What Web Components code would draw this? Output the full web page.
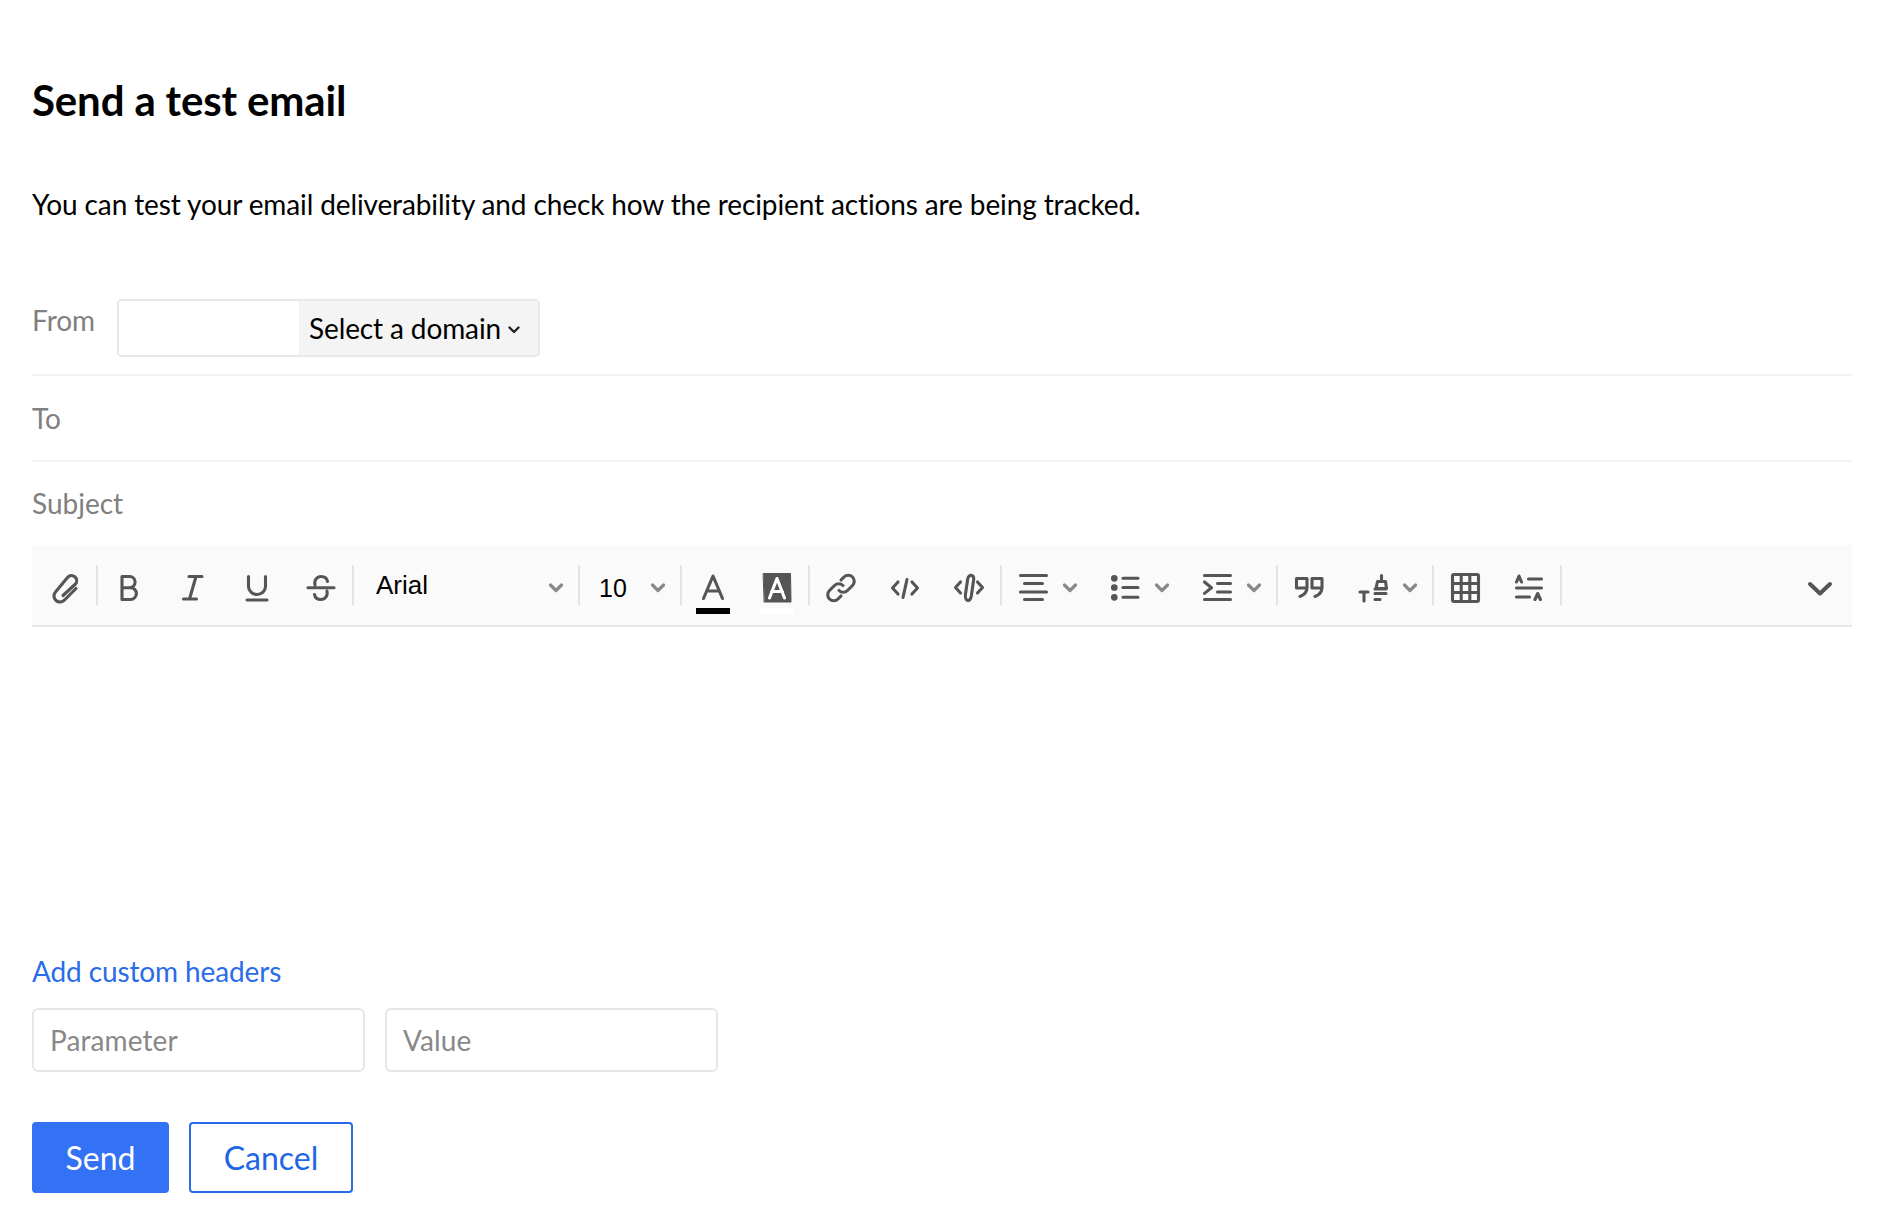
<!DOCTYPE html>
<html>
<head>
<meta charset="utf-8">
<title>Send a test email</title>
<style>
  html, body { margin: 0; background: #fff; }
  body { font-family: Lato, "Liberation Sans", sans-serif; color: #000; }
</style>
</head>
<body>
<email-page></email-page>

<script>
const ICONS = {
  clip: '<path d="M27 16.500 15.500 28a6 6 0 0 1-9-8L18.500 5.500a5 5 0 0 1 8 6.500L14 23.500"/>',
  bold: '<path d="M9 4.500h7.500a5.600 5.600 0 0 1 0 11.200H9zM9 15.700h8.500a5.900 5.900 0 0 1 0 11.800H9z"/>',
  italic: '<path d="M12 4.500h13M6.500 27h13M19 4.500 12.500 27"/>',
  underline: '<path d="M7.500 4.500v10a8.500 8 0 0 0 17 0v-10M6 28h20"/>',
  strike: '<path d="M3 15.700h26M10 13C9 8 12 4.500 16 4.500c3.500 0 6 2 6.500 5M22 19c1 5-2 8.500-6 8.500-3.500 0-6-2-6.500-5"/>',
  colorA: '<path d="M6.500 26.500 16 4l9.500 22.500M9.500 19h13"/>',
  link: '<path d="M14 18.500a6 6 0 0 0 8.500 0l5-5a6 6 0 0 0-8.500-8.500l-3 3M18 13.500a6 6 0 0 0-8.500 0l-5 5a6 6 0 0 0 8.500 8.500l3-3"/>',
  code: '<path d="M9 10 3.500 16 9 22M23 10 28.500 16 23 22M18 7.500l-4 18"/>',
  source: '<path d="M7.500 10 2.500 15.500l5 5.500M24.500 10l5 5.500-5 5.500M18.700 3.500c-2-.5-3.500 1-4 3.500l-2.200 15c-.5 3 .3 6 2.300 6.500 2 .3 3-2 3.500-4.500l2.300-16c.4-2-.2-4-1.900-4.500z"/>',
  align: '<path d="M3.500 3.500h26M7.500 11.500h18M3.500 20h26M7.500 27.500h18"/>',
  list: '<path d="M14 6.300h15M14 15.500h15M14 25.300h15"/><circle cx="5.300" cy="6.300" r="1.800" fill="#555"/><circle cx="5.300" cy="15.500" r="1.800" fill="#555"/><circle cx="5.300" cy="25.300" r="1.800" fill="#555"/>',
  indent: '<path d="M3.500 3.500h26M3.500 27.500h26M3.500 10l7 5.700-7 5.700M16.500 11.500h13M16.500 20h13"/>',
  quote: '<path d="M3.500 6.500h10.500v9c0 4-3 7.500-7 9M3.500 6.500v9.500h10.500M19 6.500h10v9c0 4-3 7.500-7 9M19 6.500v9.500h10"/>',
  fontsize: '<path d="M3 20h8M7 20v9M18 17h11M18 21.500h11M18 27.500h5M19 16.500l1.500-7h8l1 7zM24.500 3.500v5"/>',
  table: '<rect x="3.500" y="2.500" width="26" height="27" rx="1.500"/><path d="M12.200 2.500v27M20.800 2.500v27M3.500 11.500h26M3.500 20.500h26"/>',
  spacing: '<path d="M3.500 10 6 4 8.500 10M15.500 7h13M3.500 16h25M3.500 25h13M22 27.500l2.700-6 2.700 6"/>',
  chevron: '<path d="M2.500 5 8 10.500 13.500 5"/>'
};

// one square toolbar cell, optionally with the small dropdown arrow next to it
class ToolButton extends HTMLElement {
  constructor() {
    super();
    this.attachShadow({ mode: 'open' });
    const icon = this.getAttribute('icon');
    const arrow = this.hasAttribute('arrow');
    this.shadowRoot.innerHTML = `
      <style>
        :host { display: flex; align-items: center; height: 100%; }
        .cell { width: 64px; display: flex; justify-content: center; align-items: center; }
        svg.ico { width: 32px; height: 32px; fill: none; stroke: #555; stroke-width: 3.1; stroke-linecap: round; stroke-linejoin: round; }
        svg.arrow { width: 16px; height: 16px; margin: 0 15px 0 -3px; fill: none; stroke: #888; stroke-width: 3.2; stroke-linecap: round; stroke-linejoin: round; }
      </style>
      <div class="cell"><svg class="ico" viewBox="0 0 32 32">${ICONS[icon]}</svg></div>
      ${arrow ? `<svg class="arrow" viewBox="0 0 16 16">${ICONS.chevron}</svg>` : ''}
    `;
  }
}
customElements.define('tool-button', ToolButton);

class ColorButton extends HTMLElement {
  constructor() {
    super();
    this.attachShadow({ mode: 'open' });
    const filled = this.hasAttribute('filled');
    this.shadowRoot.innerHTML = `
      <style>
        :host { display: block; width: 64px; height: 100%; position: relative; }
        svg { position: absolute; left: 16px; top: 21px; width: 32px; height: 32px; fill: none; stroke-width: 3.1; stroke-linecap: round; stroke-linejoin: round; }
        .bar { position: absolute; left: 15px; top: 57px; width: 34px; height: 6px; background: ${filled ? '#fff' : '#000'}; }
      </style>
      <svg viewBox="0 0 32 32">
        ${filled ? '<path d="M2.500 1.500h27L30 30H3.500z" fill="#555" stroke="#555" stroke-width="1"/><path d="M8.500 26 16 6.500 23.500 26M10.500 19.500h11" stroke="#fff"/>'
                 : `<g stroke="#555">${ICONS.colorA}</g>`}
      </svg>
      <div class="bar"></div>
    `;
  }
}
customElements.define('color-button', ColorButton);

class ToolSelect extends HTMLElement {
  constructor() {
    super();
    this.attachShadow({ mode: 'open' });
    this.shadowRoot.innerHTML = `
      <style>
        :host { display: flex; align-items: center; height: 100%; box-sizing: border-box; font-family: "Liberation Sans", Arial, sans-serif; color: #000; }
        svg { width: 16px; height: 16px; margin-left: auto; fill: none; stroke: #888; stroke-width: 3.2; stroke-linecap: round; stroke-linejoin: round; }
      </style>
      <slot></slot>
      <svg viewBox="0 0 16 16">${ICONS.chevron}</svg>
    `;
  }
}
customElements.define('tool-select', ToolSelect);

class EditorToolbar extends HTMLElement {
  constructor() {
    super();
    this.attachShadow({ mode: 'open' });
    this.shadowRoot.innerHTML = `
      <style>
        :host { display: flex; align-items: center; height: 82px; padding-top: 6px; box-sizing: border-box; background: #fafafa; border-bottom: 2px solid #e6e6e6; }
        .sep { flex: none; width: 2px; height: 40px; margin: -6px -1px 0; background: #e3e3e3; }
        .start { width: 1px; }
        .font { width: 226px; padding: 0 15px 0 23px; font-size: 26px; box-sizing: border-box; }
        .font span { position: relative; top: -3px; }
        .size { width: 102px; padding: 0 15px 0 20px; font-size: 25px; box-sizing: border-box; }
        .more { margin-left: auto; width: 64px; display: flex; justify-content: center; }
        .more svg { width: 32px; height: 32px; fill: none; stroke: #555; stroke-width: 4; stroke-linecap: round; stroke-linejoin: round; }
      </style>
      <div class="start"></div>
      <tool-button icon="clip"></tool-button>
      <div class="sep"></div>
      <tool-button icon="bold"></tool-button>
      <tool-button icon="italic"></tool-button>
      <tool-button icon="underline"></tool-button>
      <tool-button icon="strike"></tool-button>
      <div class="sep"></div>
      <tool-select class="font"><span>Arial</span></tool-select>
      <div class="sep"></div>
      <tool-select class="size"><span>10</span></tool-select>
      <div class="sep"></div>
      <color-button></color-button>
      <color-button filled></color-button>
      <div class="sep"></div>
      <tool-button icon="link"></tool-button>
      <tool-button icon="code"></tool-button>
      <tool-button icon="source"></tool-button>
      <div class="sep"></div>
      <tool-button icon="align" arrow></tool-button>
      <tool-button icon="list" arrow></tool-button>
      <tool-button icon="indent" arrow></tool-button>
      <div class="sep"></div>
      <tool-button icon="quote"></tool-button>
      <tool-button icon="fontsize" arrow></tool-button>
      <div class="sep"></div>
      <tool-button icon="table"></tool-button>
      <tool-button icon="spacing"></tool-button>
      <div class="sep"></div>
      <div class="more"><svg viewBox="0 0 32 32"><path d="M6 12 16 21.500 26 12"/></svg></div>
    `;
  }
}
customElements.define('editor-toolbar', EditorToolbar);

class FormRow extends HTMLElement {
  constructor() {
    super();
    this.attachShadow({ mode: 'open' });
    this.shadowRoot.innerHTML = `
      <style>
        :host { display: flex; box-sizing: border-box; border-bottom: 2px solid #f2f2f2; font-size: 28px; color: #808080; }
        :host([plain]) { border-bottom: 0; }
        .label { line-height: 34px; }
      </style>
      <div class="label"><slot name="label"></slot></div>
      <slot></slot>
    `;
  }
}
customElements.define('form-row', FormRow);

class DomainSelect extends HTMLElement {
  constructor() {
    super();
    this.attachShadow({ mode: 'open' });
    this.shadowRoot.innerHTML = `
      <style>
        :host { display: flex; width: 423px; height: 58px; box-sizing: border-box; border: 2px solid #e8e8e8; border-radius: 5px; color: #000; font-size: 28px; letter-spacing: -0.12px; overflow: hidden; }
        .input { width: 180px; background: #fff; }
        .domain { flex: 1; display: flex; align-items: center; padding-left: 10px; background: #f4f4f4; }
        svg { width: 16px; height: 16px; margin-left: 5px; margin-top: 4px; fill: none; stroke: #222; stroke-width: 2.4; stroke-linecap: round; stroke-linejoin: round; }
      </style>
      <div class="input"></div>
      <div class="domain"><span>Select a domain</span><svg viewBox="0 0 16 16"><path d="M3.500 5.500 8 10l4.500-4.500"/></svg></div>
    `;
  }
}
customElements.define('domain-select', DomainSelect);

class TextBox extends HTMLElement {
  constructor() {
    super();
    this.attachShadow({ mode: 'open' });
    this.shadowRoot.innerHTML = `
      <style>
        :host { display: flex; align-items: center; width: 333px; height: 64px; padding-left: 16px; box-sizing: border-box; border: 2px solid #e6e6e6; border-radius: 6px; font-size: 28px; letter-spacing: 0.1px; color: #888; }
      </style>
      <slot></slot>
    `;
  }
}
customElements.define('text-box', TextBox);

class ActionButton extends HTMLElement {
  constructor() {
    super();
    this.attachShadow({ mode: 'open' });
    this.shadowRoot.innerHTML = `
      <style>
        :host { display: flex; align-items: center; justify-content: center; height: 71px; box-sizing: border-box; border-radius: 4px; font-size: 32px; border: 2px solid #3371f5; background: #3371f5; color: #fff; }
        :host([outline]) { background: #fff; color: #1f66e5; border-color: #2a6bea; }
      </style>
      <slot></slot>
    `;
  }
}
customElements.define('action-button', ActionButton);

class EmailPage extends HTMLElement {
  constructor() {
    super();
    this.attachShadow({ mode: 'open' });
    this.shadowRoot.innerHTML = `
      <style>
        :host { display: block; padding: 0 36px 0 32px; font-family: Lato, "Liberation Sans", sans-serif; }
        h1 { margin: 0; padding-top: 75px; font-size: 42px; line-height: 50px; letter-spacing: -0.15px; font-weight: 700; color: #000; }
        p { margin: 0; padding-top: 60px; font-size: 28px; line-height: 38px; letter-spacing: -0.12px; color: #000; }
        .from { margin-top: 76px; padding-bottom: 17px; }
        .from span { position: relative; top: 4px; display: inline-block; width: 85px; }
        .to { height: 86px; padding-top: 25px; }
        .subject { height: 83px; padding-top: 24px; }
        .editor-body { height: 327px; }
        a { display: block; font-size: 28px; line-height: 34px; letter-spacing: -0.12px; color: #2a6bea; }
        .fields { display: flex; gap: 20px; margin-top: 20px; }
        .actions { display: flex; gap: 20px; margin-top: 50px; }
        .send { width: 137px; }
        .cancel { width: 164px; }
      </style>
      <h1>Send a test email</h1>
      <p>You can test your email deliverability and check how the recipient actions are being tracked.</p>
      <form-row class="from"><span slot="label">From</span><domain-select></domain-select></form-row>
      <form-row class="to"><span slot="label">To</span></form-row>
      <form-row class="subject" plain><span slot="label">Subject</span></form-row>
      <editor-toolbar></editor-toolbar>
      <div class="editor-body"></div>
      <a>Add custom headers</a>
      <div class="fields"><text-box>Parameter</text-box><text-box>Value</text-box></div>
      <div class="actions"><action-button class="send">Send</action-button><action-button class="cancel" outline>Cancel</action-button></div>
    `;
  }
}
customElements.define('email-page', EmailPage);
</script>
</body>
</html>
